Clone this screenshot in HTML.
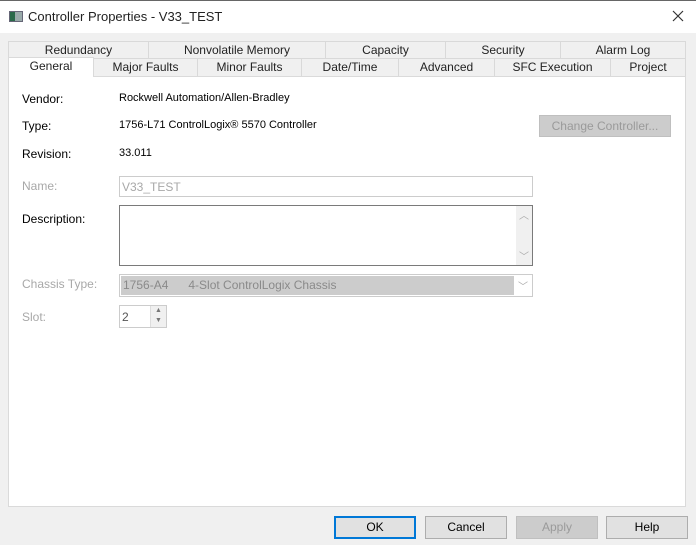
<!DOCTYPE html>
<html><head><style>
*{margin:0;padding:0;box-sizing:border-box}
body{width:696px;height:545px;background:#f0f0f0;font-family:"Liberation Sans",Arial,sans-serif;font-size:12px;color:#000;position:relative;overflow:hidden}
.a{position:absolute}
.title{left:0;top:0;width:696px;height:33px;background:#fff;border-top:1px solid #666}
.tab{position:absolute;height:18px;border:1px solid #d9d9d9;border-bottom:none;background:#f0f0f0;text-align:center;line-height:17px;font-size:12px;color:#222}
.panel{left:8px;top:76px;width:678px;height:431px;background:#fff;border:1px solid #dadada}
.lbl{position:absolute;font-size:12px}
.dis{color:#a8a8a8}
.box{position:absolute;border:1px solid #ccc;background:#fff}
.btn{position:absolute;top:516px;height:23px;width:82px;border:1px solid #adadad;background:#e1e1e1;text-align:center;line-height:21px;font-size:12px}
</style></head><body>
<div class="a title">
  <div class="a" style="left:9px;top:10px;width:14px;height:11px;background:#9aa;border:1px solid #667"><div style="width:5px;height:9px;background:#2a6a4a"></div></div>
  <div class="a" style="left:28px;top:8px;font-size:13px;color:#222">Controller Properties - V33_TEST</div>
  <svg class="a" style="left:672px;top:9px" width="12" height="12"><path d="M1 1L11 11M11 1L1 11" stroke="#333" stroke-width="1.2"/></svg>
</div>
<div class="tab" style="left:8px;top:41px;width:141px">Redundancy</div>
<div class="tab" style="left:148px;top:41px;width:178px">Nonvolatile Memory</div>
<div class="tab" style="left:325px;top:41px;width:121px">Capacity</div>
<div class="tab" style="left:445px;top:41px;width:116px">Security</div>
<div class="tab" style="left:560px;top:41px;width:126px">Alarm Log</div>
<div class="tab" style="left:93px;top:58px;width:105px">Major Faults</div>
<div class="tab" style="left:197px;top:58px;width:105px">Minor Faults</div>
<div class="tab" style="left:301px;top:58px;width:98px">Date/Time</div>
<div class="tab" style="left:398px;top:58px;width:97px">Advanced</div>
<div class="tab" style="left:494px;top:58px;width:117px">SFC Execution</div>
<div class="tab" style="left:610px;top:58px;width:76px">Project</div>
<div class="a panel"></div>
<div class="tab" style="left:8px;top:57px;width:86px;height:20px;background:#fff;border-color:#dadada;line-height:17px">General</div>
<div class="lbl" style="left:22px;top:92px">Vendor:</div>
<div class="lbl" style="left:119px;top:92px;font-size:11px">Rockwell Automation/Allen-Bradley</div>
<div class="lbl" style="left:22px;top:119px">Type:</div>
<div class="lbl" style="left:119px;top:119px;font-size:11px">1756-L71 ControlLogix® 5570 Controller</div>
<div class="lbl" style="left:22px;top:147px">Revision:</div>
<div class="lbl" style="left:119px;top:147px;font-size:11px">33.011</div>
<div class="a" style="left:539px;top:115px;width:132px;height:22px;background:#ccc;border:1px solid #bfbfbf;color:#9a9a9a;text-align:center;line-height:20px">Change Controller...</div>
<div class="lbl dis" style="left:22px;top:179px">Name:</div>
<div class="box" style="left:119px;top:176px;width:414px;height:21px"><span class="a dis" style="left:2px;top:3px">V33_TEST</span></div>
<div class="lbl" style="left:22px;top:212px">Description:</div>
<div class="box" style="left:119px;top:205px;width:414px;height:61px;border-color:#7a7a7a">
  <div class="a" style="right:0;top:0;width:16px;height:59px;background:#f0f0f0"></div>
  <div class="a" style="right:3px;top:1px;color:#aaa;font-size:10px">︿</div>
  <div class="a" style="right:3px;top:42px;color:#aaa;font-size:10px">﹀</div>
</div>
<div class="lbl dis" style="left:22px;top:277px">Chassis Type:</div>
<div class="box" style="left:119px;top:274px;width:414px;height:23px">
  <div class="a" style="left:1px;top:1px;width:393px;height:19px;background:#ccc;color:#8a8a8a;line-height:19px;padding-left:2px">1756-A4&nbsp;&nbsp;&nbsp;&nbsp;&nbsp;&nbsp;4-Slot ControlLogix Chassis</div>
  <div class="a" style="right:4px;top:3px;color:#aaa;font-size:10px">﹀</div>
</div>
<div class="lbl dis" style="left:22px;top:310px">Slot:</div>
<div class="box" style="left:119px;top:305px;width:48px;height:23px">
  <span class="a" style="left:2px;top:4px;color:#555">2</span>
  <div class="a" style="left:30px;top:0;width:16px;height:21px;background:#f0f0f0;border-left:1px solid #ddd;font-size:7px;color:#777;text-align:center;line-height:10px">▲<br>▼</div>
</div>
<div class="btn" style="left:334px;border:2px solid #0078d7;line-height:19px">OK</div>
<div class="btn" style="left:425px">Cancel</div>
<div class="btn" style="left:516px;background:#ccc;border-color:#bfbfbf;color:#9a9a9a">Apply</div>
<div class="btn" style="left:606px">Help</div>
</body></html>
